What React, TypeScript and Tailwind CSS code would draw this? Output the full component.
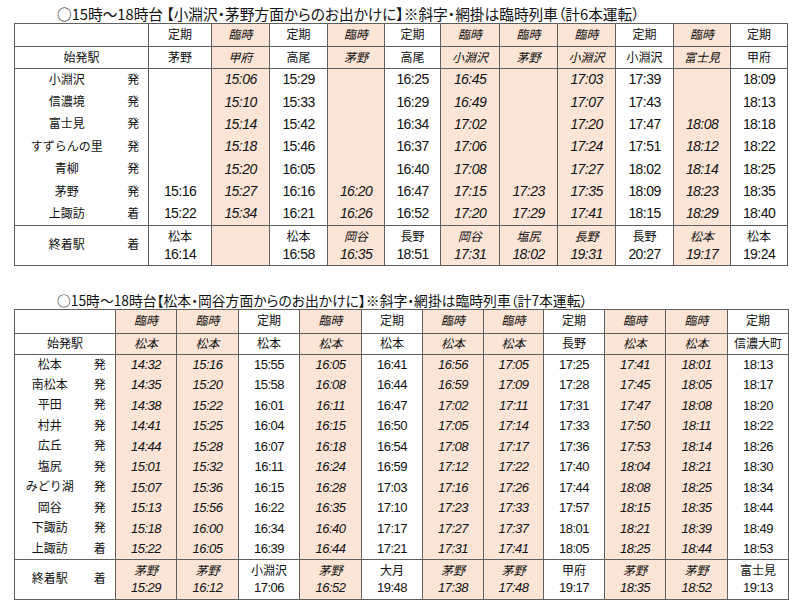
type Col = {
  rinji: boolean;
  origin: string;
  times: string[];
  dest: string;
  destTime: string;
};

type TableSpec = {
  stations: [string, string][];
  cols: Col[];
  nameW: number;
  markW: number;
  widths: number[];
  head1H: number;
  head2H: number;
  rowH: number;
  timeCls: string;
};

const shade = "bg-[#fce4d6]";
const line = "border-[#5f5f5f]";

const up: TableSpec = {
  stations: [
    ["小淵沢", "発"],
    ["信濃境", "発"],
    ["富士見", "発"],
    ["すずらんの里", "発"],
    ["青柳", "発"],
    ["茅野", "発"],
    ["上諏訪", "着"],
  ],
  cols: [
    { rinji: false, origin: "茅野", times: ["", "", "", "", "", "15:16", "15:22"], dest: "松本", destTime: "16:14" },
    { rinji: true, origin: "甲府", times: ["15:06", "15:10", "15:14", "15:18", "15:20", "15:27", "15:34"], dest: "", destTime: "" },
    { rinji: false, origin: "高尾", times: ["15:29", "15:33", "15:42", "15:46", "16:05", "16:16", "16:21"], dest: "松本", destTime: "16:58" },
    { rinji: true, origin: "茅野", times: ["", "", "", "", "", "16:20", "16:26"], dest: "岡谷", destTime: "16:35" },
    { rinji: false, origin: "高尾", times: ["16:25", "16:29", "16:34", "16:37", "16:40", "16:47", "16:52"], dest: "長野", destTime: "18:51" },
    { rinji: true, origin: "小淵沢", times: ["16:45", "16:49", "17:02", "17:06", "17:08", "17:15", "17:20"], dest: "岡谷", destTime: "17:31" },
    { rinji: true, origin: "茅野", times: ["", "", "", "", "", "17:23", "17:29"], dest: "塩尻", destTime: "18:02" },
    { rinji: true, origin: "小淵沢", times: ["17:03", "17:07", "17:20", "17:24", "17:27", "17:35", "17:41"], dest: "長野", destTime: "19:31" },
    { rinji: false, origin: "小淵沢", times: ["17:39", "17:43", "17:47", "17:51", "18:02", "18:09", "18:15"], dest: "長野", destTime: "20:27" },
    { rinji: true, origin: "富士見", times: ["", "", "18:08", "18:12", "18:14", "18:23", "18:29"], dest: "松本", destTime: "19:17" },
    { rinji: false, origin: "甲府", times: ["18:09", "18:13", "18:18", "18:22", "18:25", "18:35", "18:40"], dest: "松本", destTime: "19:24" },
  ],
  nameW: 104,
  markW: 30,
  widths: [63, 58, 58, 57, 56, 59, 58, 58, 58, 57, 57],
  head1H: 23,
  head2H: 22,
  rowH: 22.4,
  timeCls: "text-[14px] tracking-[-0.04em]",
};

const down: TableSpec = {
  stations: [
    ["松本", "発"],
    ["南松本", "発"],
    ["平田", "発"],
    ["村井", "発"],
    ["広丘", "発"],
    ["塩尻", "発"],
    ["みどり湖", "発"],
    ["岡谷", "発"],
    ["下諏訪", "発"],
    ["上諏訪", "着"],
  ],
  cols: [
    { rinji: true, origin: "松本", times: ["14:32", "14:35", "14:38", "14:41", "14:44", "15:01", "15:07", "15:13", "15:18", "15:22"], dest: "茅野", destTime: "15:29" },
    { rinji: true, origin: "松本", times: ["15:16", "15:20", "15:22", "15:25", "15:28", "15:32", "15:36", "15:56", "16:00", "16:05"], dest: "茅野", destTime: "16:12" },
    { rinji: false, origin: "松本", times: ["15:55", "15:58", "16:01", "16:04", "16:07", "16:11", "16:15", "16:22", "16:34", "16:39"], dest: "小淵沢", destTime: "17:06" },
    { rinji: true, origin: "松本", times: ["16:05", "16:08", "16:11", "16:15", "16:18", "16:24", "16:28", "16:35", "16:40", "16:44"], dest: "茅野", destTime: "16:52" },
    { rinji: false, origin: "松本", times: ["16:41", "16:44", "16:47", "16:50", "16:54", "16:59", "17:03", "17:10", "17:17", "17:21"], dest: "大月", destTime: "19:48" },
    { rinji: true, origin: "松本", times: ["16:56", "16:59", "17:02", "17:05", "17:08", "17:12", "17:16", "17:23", "17:27", "17:31"], dest: "茅野", destTime: "17:38" },
    { rinji: true, origin: "松本", times: ["17:05", "17:09", "17:11", "17:14", "17:17", "17:22", "17:26", "17:33", "17:37", "17:41"], dest: "茅野", destTime: "17:48" },
    { rinji: false, origin: "長野", times: ["17:25", "17:28", "17:31", "17:33", "17:36", "17:40", "17:44", "17:57", "18:01", "18:05"], dest: "甲府", destTime: "19:17" },
    { rinji: true, origin: "松本", times: ["17:41", "17:45", "17:47", "17:50", "17:53", "18:04", "18:08", "18:15", "18:21", "18:25"], dest: "茅野", destTime: "18:35" },
    { rinji: true, origin: "松本", times: ["18:01", "18:05", "18:08", "18:11", "18:14", "18:21", "18:25", "18:35", "18:39", "18:44"], dest: "茅野", destTime: "18:52" },
    { rinji: false, origin: "信濃大町", times: ["18:13", "18:17", "18:20", "18:22", "18:26", "18:30", "18:34", "18:44", "18:49", "18:53"], dest: "富士見", destTime: "19:13" },
  ],
  nameW: 70,
  markW: 31,
  widths: [61, 62, 61, 62, 61, 61, 60, 61, 61, 62, 61],
  head1H: 24,
  head2H: 21,
  rowH: 20.5,
  timeCls: "text-[13px] tracking-[-0.04em]",
};

function colCls(c: Col) {
  return `border-l ${line} text-center ${c.rinji ? `${shade} italic` : ""}`;
}

function Timetable({ spec }: { spec: TableSpec }) {
  const { stations, cols, rowH } = spec;
  const last = stations.length - 1;
  return (
    <table className={`table-fixed border-collapse border ${line} text-[#111]`}>
      <colgroup>
        <col style={{ width: spec.nameW }} />
        <col style={{ width: spec.markW }} />
        {spec.widths.map((w, i) => (
          <col key={i} style={{ width: w }} />
        ))}
      </colgroup>
      <tbody>
        <tr style={{ height: spec.head1H }} className="text-[12px]">
          <td colSpan={2} className={`border-b ${line}`} />
          {cols.map((c, i) => (
            <td key={i} className={`${colCls(c)} border-b`}>
              {c.rinji ? "臨時" : "定期"}
            </td>
          ))}
        </tr>
        <tr style={{ height: spec.head2H }} className="text-[12px]">
          <td colSpan={2} className={`border-b ${line} text-center`}>
            始発駅
          </td>
          {cols.map((c, i) => (
            <td key={i} className={`${colCls(c)} border-b`}>
              {c.origin}
            </td>
          ))}
        </tr>
        {stations.map(([name, mark], r) => (
          <tr key={name} style={{ height: rowH }}>
            <td className={`text-center text-[12px] ${r === last ? `border-b ${line}` : ""}`}>{name}</td>
            <td className={`text-center text-[12px] ${r === last ? `border-b ${line}` : ""}`}>{mark}</td>
            {cols.map((c, i) => (
              <td key={i} className={`${colCls(c)} ${spec.timeCls} ${r === last ? "border-b" : ""}`}>
                {c.times[r]}
              </td>
            ))}
          </tr>
        ))}
        <tr className="h-[20px]">
          <td rowSpan={2} className="text-center text-[12px]">
            終着駅
          </td>
          <td rowSpan={2} className="text-center text-[12px]">
            着
          </td>
          {cols.map((c, i) => (
            <td key={i} className={`${colCls(c)} text-[12px] leading-none pt-[3px]`}>
              {c.dest}
            </td>
          ))}
        </tr>
        <tr className="h-[20px]">
          {cols.map((c, i) => (
            <td key={i} className={`${colCls(c)} ${spec.timeCls} leading-none pb-[2px]`}>
              {c.destTime}
            </td>
          ))}
        </tr>
      </tbody>
    </table>
  );
}

export default function App() {
  return (
    <div className="h-[613px] w-[800px] bg-white pl-[14px] font-['Liberation_Sans','Noto_Sans_CJK_JP',sans-serif] text-[#111]">
      <div className="h-[23px] whitespace-nowrap pl-[43px] pt-[5px] font-['Noto_Sans_CJK_JP',sans-serif] text-[14.7px] leading-[17px] [font-feature-settings:'palt']">
        ○15時～18時台 【小淵沢・茅野方面からのお出かけに】※斜字・網掛は臨時列車（計6本運転）
      </div>
      <Timetable spec={up} />
      <div className="h-[43px] whitespace-nowrap pl-[43px] pt-[26px] font-['Noto_Sans_CJK_JP',sans-serif] text-[13.8px] leading-[16px] [font-feature-settings:'palt']">
        ○15時～18時台【松本・岡谷方面からのお出かけに】※斜字・網掛は臨時列車（計7本運転）
      </div>
      <Timetable spec={down} />
    </div>
  );
}
